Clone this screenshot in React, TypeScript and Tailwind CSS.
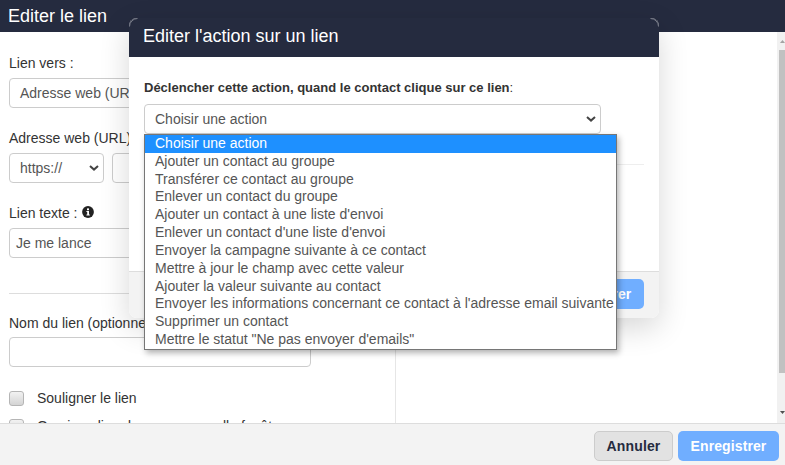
const options = [
  "Choisir une action",
  "Ajouter un contact au groupe",
  "Transférer ce contact au groupe",
  "Enlever un contact du groupe",
  "Ajouter un contact à une liste d'envoi",
  "Enlever un contact d'une liste d'envoi",
  "Envoyer la campagne suivante à ce contact",
  "Mettre à jour le champ avec cette valeur",
  "Ajouter la valeur suivante au contact",
  "Envoyer les informations concernant ce contact à l'adresse email suivante",
  "Supprimer un contact",
  'Mettre le statut "Ne pas envoyer d\'emails"',
];

function Check({ label }: { label: string }) {
  return (
    <div className="flex items-center h-[15px]">
      <span className="block w-[15px] h-[15px] rounded-[3px] border border-[#b5b5b5] bg-gradient-to-b from-[#f2f2f2] to-[#d4d4d4]" />
      <span className="ml-[13px]">{label}</span>
    </div>
  );
}

function Chevron() {
  return (
    <svg className="absolute right-[5px] top-[12px] pointer-events-none" width="10" height="6" viewBox="0 0 10 6" aria-hidden="true">
      <path d="M1 1l4 3.6L9 1" fill="none" stroke="#444" strokeWidth="2" />
    </svg>
  );
}

const field = "block h-[30px] rounded-[4px] border border-[#ccc] bg-white text-[14px] text-[#555] px-[10px]";
const selectField = "appearance-none w-full h-[30px] rounded-[4px] border border-[#ccc] bg-white text-[14px] text-[#555] pl-[10px]";

export default function App() {
  return (
    <div className="relative w-[785px] h-[465px] overflow-hidden bg-white flex flex-col text-[14px] text-[#333] font-['Liberation_Sans',Arial,sans-serif]">
      <header className="h-[32px] shrink-0 bg-[#252b3f] text-white text-[18px] leading-[32px] pl-[8px]">Editer le lien</header>

      <div className="flex-1 min-h-0 flex overflow-hidden">
        <div className="w-[396px] shrink-0 border-r border-[#e6e6e6] pl-[9px] pr-[10px] pt-[23px]">
          <div className="leading-[16px]">Lien vers :</div>
          <div className={field + " mt-[7px] w-[302px] leading-[28px]"}>Adresse web (URL)</div>

          <div className="leading-[16px] mt-[22px]">Adresse web (URL) :</div>
          <div className="flex gap-[8px] mt-[7px]">
            <div className="relative w-[95px]">
              <select className={selectField} defaultValue="https://">
                <option>https://</option>
              </select>
              <Chevron />
            </div>
            <div className="h-[30px] w-[190px] rounded-[4px] border border-[#ccc]" />
          </div>

          <div className="leading-[16px] mt-[22px] flex items-center">
            Lien texte :
            <svg className="ml-[4px] -mt-[2px]" width="12" height="12" viewBox="0 0 12 12" aria-hidden="true">
              <circle cx="6" cy="6" r="5.9" fill="#222" />
              <rect x="5" y="2.4" width="2" height="1.8" fill="#fff" />
              <path d="M4.4 5h2.6v3.6h.8v1H4.4v-1h.8V6h-.8z" fill="#fff" />
            </svg>
          </div>
          <div className={field + " mt-[7px] w-[302px] leading-[28px] pl-[6px]"}>Je me lance</div>

          <div className="h-px bg-[#ddd] mt-[35px] w-[376px]" />

          <div className="leading-[16px] mt-[21px]">Nom du lien (optionnel) :</div>
          <div className="h-[30px] w-[302px] rounded-[4px] border border-[#ccc] mt-[6px]" />

          <div className="mt-[24px]">
            <Check label="Souligner le lien" />
          </div>
          <div className="mt-[13px]">
            <Check label="Ouvrir ce lien dans une nouvelle fenêtre" />
          </div>
        </div>

        <div className="flex-1" />

        <div className="w-[8px] shrink-0 bg-[#f1f1f1] flex flex-col items-end">
          <div className="h-[18px] w-[6px] flex justify-center pt-[8px]">
            <svg width="5" height="3" viewBox="0 0 5 3" aria-hidden="true"><path d="M2.5 0L5 3H0z" fill="#a3a3a3" /></svg>
          </div>
          <div className="h-[323px] w-[6px] bg-[#c1c1c1]" />
          <div className="h-[50px] w-[6px] flex justify-center items-end pb-[9px]">
            <svg width="5" height="3" viewBox="0 0 5 3" aria-hidden="true"><path d="M0 0h5L2.5 3z" fill="#505050" /></svg>
          </div>
        </div>
      </div>

      <footer className="h-[42px] shrink-0 bg-[#f3f3f3] border-t border-[#ddd] flex justify-end items-start gap-[5px] pt-[7px] pr-[6px]">
        <button className="h-[30px] w-[79px] rounded-[5px] border border-[#ccc] bg-[#e2e2e2] text-[#252b3f] font-bold tracking-[0.15px]">Annuler</button>
        <button className="h-[30px] w-[101px] rounded-[5px] bg-[#70aeff] text-white font-bold tracking-[0.1px]">Enregistrer</button>
      </footer>

      <div className="absolute left-[129px] top-[18px] w-[530px] h-[300px] rounded-[8px] bg-white flex flex-col overflow-hidden shadow-[0_10px_30px_rgba(0,0,0,0.16)]">
        <div className="relative h-[39px] shrink-0 bg-[#252b3f] text-white text-[18px] leading-[37px] pl-[14px]">
          Editer l'action sur un lien
          <svg className="absolute left-0 top-0" width="9" height="9" viewBox="0 0 9 9" aria-hidden="true">
            <path d="M0.5 8.5A8 8 0 0 1 8.5 0.5" fill="none" stroke="#fff" strokeOpacity="0.4" />
          </svg>
          <svg className="absolute right-0 top-0" width="9" height="9" viewBox="0 0 9 9" aria-hidden="true">
            <path d="M0.5 0.5A8 8 0 0 1 8.5 8.5" fill="none" stroke="#fff" strokeOpacity="0.4" />
          </svg>
        </div>
        <div className="flex-1 px-[15px] pt-[23px]">
          <div className="leading-[16px] text-[13px]"><b>Déclencher cette action, quand le contact clique sur ce lien</b>:</div>
          <div className="relative mt-[8px] w-[457px]">
            <select className={selectField} defaultValue="Choisir une action">
              {options.map((o) => <option key={o}>{o}</option>)}
            </select>
            <Chevron />
          </div>
          <div className="h-px bg-[#eee] mt-[30px]" />
        </div>
        <div className="h-[47px] shrink-0 bg-[#f3f3f3] border-t border-[#ddd] flex justify-end pt-[7px] pr-[15px]">
          <button className="h-[30px] w-[101px] rounded-[5px] bg-[#70aeff] text-white font-bold tracking-[0.1px]">Enregistrer</button>
        </div>
      </div>

      <ul className="absolute left-[144px] top-[134px] w-[473px] h-[216px] border border-[#767676] bg-white text-[#555] text-[14px] leading-[17.83px] shadow-[2px_3px_6px_rgba(0,0,0,0.3)]">
        {options.map((o, i) => (
          <li key={o} className={i === 0 ? "pl-[10px] bg-[#1e90ff] text-white" : "pl-[10px] whitespace-nowrap"}>{o}</li>
        ))}
      </ul>
    </div>
  );
}
